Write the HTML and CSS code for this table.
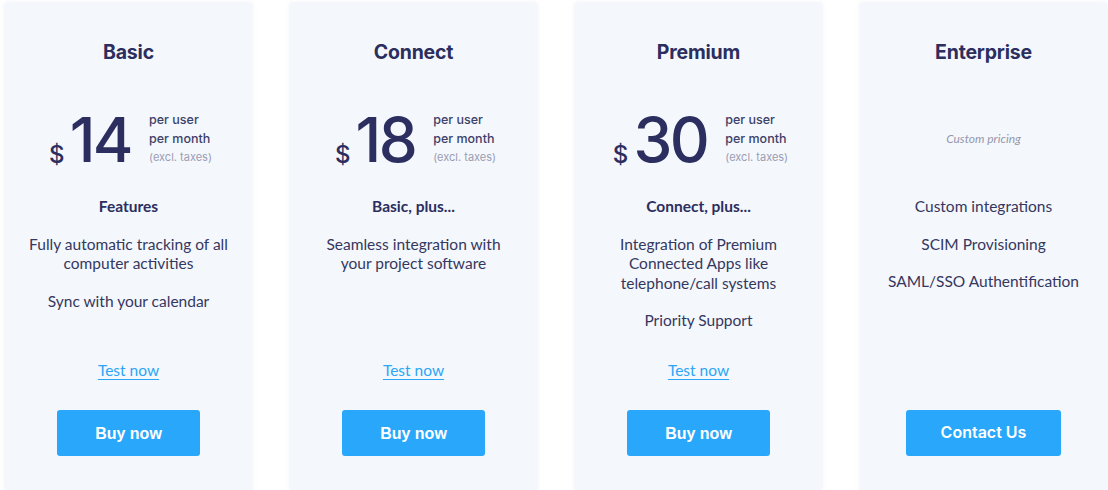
FILE: index.html
```html
<!DOCTYPE html>
<html lang="en">
<head>
<meta charset="utf-8">
<title>Pricing</title>
<link rel="stylesheet" href="styles.css">
</head>
<body>
<div class="plans">
  <section class="plan">
    <h2 class="plan-title">Basic</h2>
    <div class="price">
      <div class="amount"><span class="currency">$</span><span class="value">14</span></div>
      <div class="per">
        <span>per user</span>
        <span>per month</span>
        <span class="tax">(excl. taxes)</span>
      </div>
    </div>
    <ul class="features">
      <li class="feature-head">Features</li>
      <li>Fully automatic tracking of all computer activities</li>
      <li>Sync with your calendar</li>
    </ul>
    <a class="test-link" href="#">Test now</a>
    <a class="btn btn-buy" href="#">Buy now</a>
  </section>

  <section class="plan">
    <h2 class="plan-title">Connect</h2>
    <div class="price">
      <div class="amount"><span class="currency">$</span><span class="value">18</span></div>
      <div class="per">
        <span>per user</span>
        <span>per month</span>
        <span class="tax">(excl. taxes)</span>
      </div>
    </div>
    <ul class="features">
      <li class="feature-head">Basic, plus...</li>
      <li>Seamless integration with your project software</li>
    </ul>
    <a class="test-link" href="#">Test now</a>
    <a class="btn btn-buy" href="#">Buy now</a>
  </section>

  <section class="plan">
    <h2 class="plan-title">Premium</h2>
    <div class="price">
      <div class="amount"><span class="currency">$</span><span class="value">30</span></div>
      <div class="per">
        <span>per user</span>
        <span>per month</span>
        <span class="tax">(excl. taxes)</span>
      </div>
    </div>
    <ul class="features">
      <li class="feature-head">Connect, plus...</li>
      <li>Integration of Premium Connected Apps like telephone/call systems</li>
      <li>Priority Support</li>
    </ul>
    <a class="test-link" href="#">Test now</a>
    <a class="btn btn-buy" href="#">Buy now</a>
  </section>

  <section class="plan">
    <h2 class="plan-title">Enterprise</h2>
    <div class="price price-custom">
      <span class="custom">Custom pricing</span>
    </div>
    <ul class="features">
      <li>Custom integrations</li>
      <li>SCIM Provisioning</li>
      <li>SAML/SSO Authentification</li>
    </ul>
    <div class="test-spacer"></div>
    <a class="btn btn-contact" href="#">Contact Us</a>
  </section>
</div>
</body>
</html>
```

FILE: styles.css
```css
html, body {
  margin: 0;
  padding: 0;
  background: #ffffff;
  overflow: hidden;
}

body {
  font-family: "Lato", "Noto Sans", sans-serif;
  color: #2c2f5e;
}

.plans {
  display: flex;
  gap: 38px;
  padding: 3px 0 0 5px;
}

.plan {
  width: 247px;
  height: 487px;
  box-sizing: border-box;
  background: #f4f7fc;
  box-shadow: 0 0 4px rgba(170, 185, 215, 0.25);
  display: flex;
  flex-direction: column;
  align-items: center;
  padding: 36px 21px 34px;
}

.plan-title {
  margin: 0;
  font-family: "Inter", sans-serif;
  font-size: 19.5px;
  line-height: 26px;
  font-weight: 700;
  color: #2b2e5e;
  letter-spacing: -0.2px;
}

.price {
  margin-top: 45px;
  height: 57px;
  display: flex;
  align-items: flex-start;
  justify-content: center;
  gap: 18px;
}

.amount {
  display: flex;
  align-items: baseline;
  gap: 5px;
  margin-left: 4px;
}

.currency {
  font-family: "Inter", sans-serif;
  font-size: 24px;
  font-weight: 500;
  color: #2b2e5e;
  position: relative;
  top: 1px;
}

.value {
  font-family: "Inter", sans-serif;
  font-size: 62px;
  line-height: 60px;
  font-weight: 500;
  letter-spacing: -2.5px;
  color: #2b2e5e;
}

.per {
  display: flex;
  flex-direction: column;
  font-family: "Inter", sans-serif;
  font-size: 12.5px;
  line-height: 19px;
  font-weight: 500;
  color: #3d4068;
}

.per .tax {
  font-size: 11px;
  font-weight: 400;
  color: #9a9db3;
}

.price-custom {
  align-items: center;
}

.custom {
  font-family: "Lato", sans-serif;
  font-style: italic;
  font-size: 12px;
  color: #9598ad;
}

.features {
  list-style: none;
  margin: 30px 0 0;
  padding: 0;
  flex: 1;
  display: flex;
  flex-direction: column;
  gap: 18px;
  text-align: center;
  font-size: 15.5px;
  line-height: 19.5px;
  color: #34375f;
}

.feature-head {
  font-weight: 700;
  color: #2b2e5e;
}

.test-link {
  font-size: 15.5px;
  line-height: 20px;
  color: #2ba6f5;
  text-decoration: underline;
  text-underline-offset: 3px;
  margin-bottom: 30px;
}

.test-spacer {
  height: 20px;
  margin-bottom: 30px;
}

.btn {
  display: flex;
  align-items: center;
  justify-content: center;
  height: 46px;
  box-sizing: border-box;
  padding: 0 38px;
  border-radius: 3px;
  background: #29a7fb;
  color: #ffffff;
  text-decoration: none;
  font-weight: 700;
  font-size: 16px;
}

.btn-buy {
  font-family: "Liberation Sans", Arial, sans-serif;
  padding-top: 2px;
}

.btn-contact {
  font-family: "Inter", sans-serif;
  font-weight: 600;
  padding-bottom: 3px;
  padding-left: 35px;
  padding-right: 35px;
}
```
